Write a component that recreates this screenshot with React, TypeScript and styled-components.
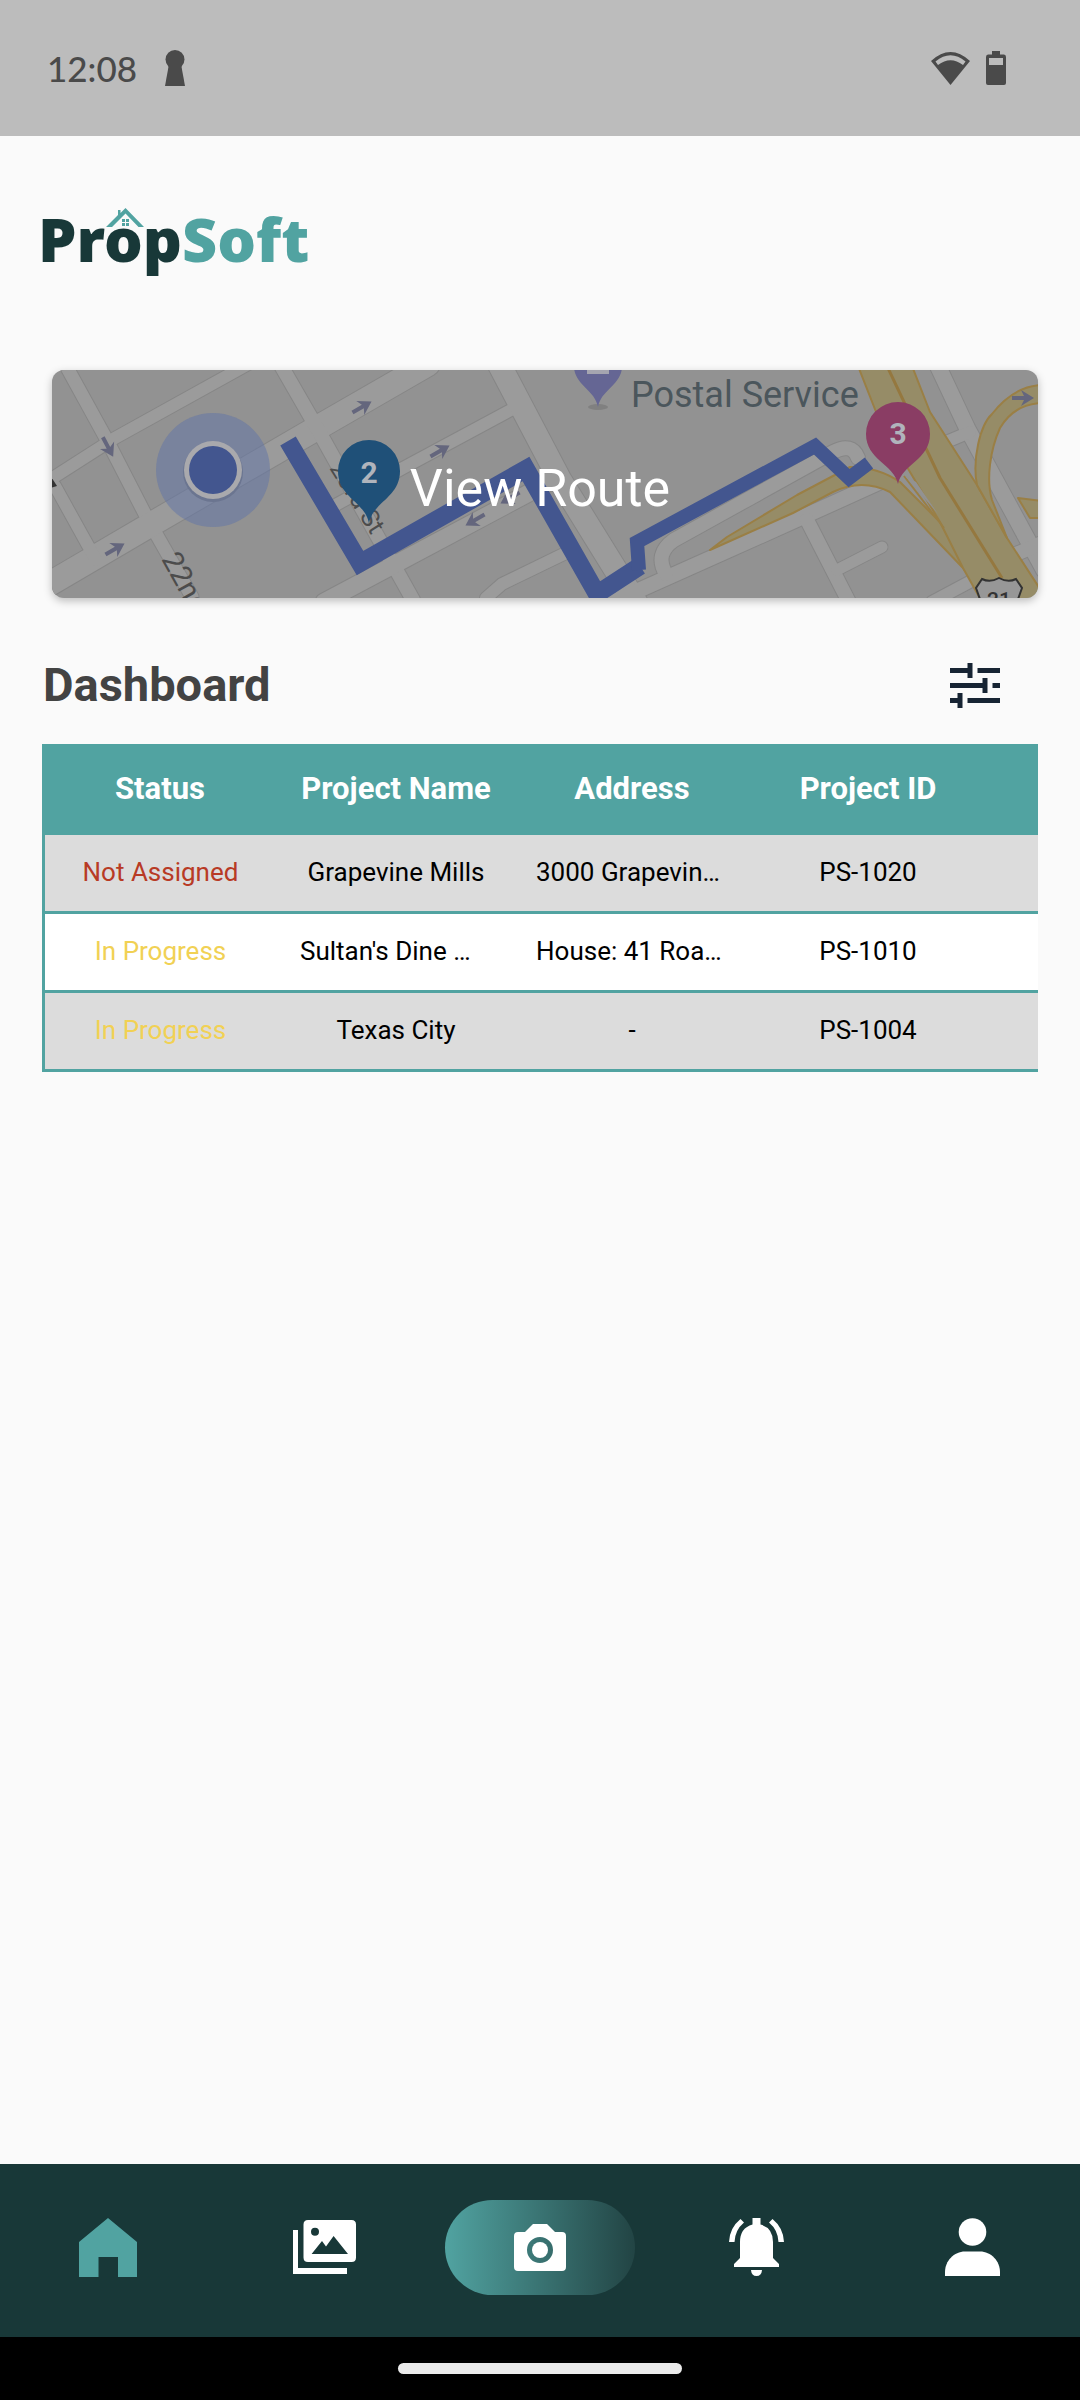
import React from "react";
import styled, { createGlobalStyle } from "styled-components";

const color = {
  teal: "#51a3a1",
  deep: "#183838",
  page: "#fafafa",
  status: "#4a4a4a",
};

const GlobalStyle = createGlobalStyle`
  *, *::before, *::after { box-sizing: border-box; }
  body {
    margin: 0;
    background: ${color.page};
    font-family: Roboto, "Liberation Sans", sans-serif;
  }
  button { font: inherit; border: 0; padding: 0; background: none; cursor: pointer; }
  svg { display: block; }
`;

const Screen = styled.div`
  min-height: 100vh;
  display: flex;
  flex-direction: column;
`;

const StatusBar = styled.header`
  height: 136px;
  padding: 0 74px 0 47px;
  background: #bcbcbc;
  color: ${color.status};
  display: flex;
  align-items: center;
  gap: 28px;
`;

const Clock = styled.time`
  font-family: Lato, sans-serif;
  font-size: 35px;
  font-weight: 500;
  line-height: 40px;
`;

const StatusIcons = styled.div`
  margin-left: auto;
  display: flex;
  align-items: center;
  gap: 16px;
`;

const Main = styled.main`
  flex: 1;
  padding: 64px 42px 0;
`;

const Logo = styled.div`
  position: relative;
  height: 80px;
  margin-left: -4px;
  font-family: "Noto Sans", "Open Sans", sans-serif;
  font-size: 61px;
  font-weight: 900;
  line-height: 78px;
  color: ${color.deep};
`;

const LogoAccent = styled.span`
  color: ${color.teal};
`;

const Roof = styled.svg`
  position: absolute;
  left: 68px;
  top: 7px;
`;

const RouteCard = styled.button`
  position: relative;
  display: grid;
  width: 100%;
  margin-top: 90px;
  padding-left: 10px;
`;

const MapImage = styled.svg`
  width: 100%;
  height: 228px;
  border-radius: 12px;
  background: #929292;
  box-shadow: 0 3px 8px rgba(0, 0, 0, 0.25);
`;

const RouteLabel = styled.span`
  position: absolute;
  inset: 8px 0 0;
  display: flex;
  align-items: center;
  justify-content: center;
  color: #fff;
  font-size: 52px;
`;

const SectionHead = styled.div`
  display: flex;
  align-items: center;
  justify-content: space-between;
  padding: 0 38px 0 1px;
  margin: 56px 0 28px;
`;

const Title = styled.h1`
  margin: 0;
  color: #434343;
  font-size: 47px;
  line-height: 62px;
  font-weight: 700;
`;

const TableScroll = styled.div`
  overflow-x: auto;
`;

const Table = styled.table`
  width: 100%;
  table-layout: fixed;
  border-spacing: 0;
`;

const Column = styled.col<{ $width?: number }>`
  width: ${(p) => (p.$width ? `${p.$width}px` : "auto")};
`;

const HeadCell = styled.th`
  height: 91px;
  padding: 0 0 2px;
  background: ${color.teal};
  color: #fff;
  font-size: 31px;
  font-weight: 700;
`;

const Row = styled.tr`
  background: #fff;
  &:nth-child(odd) { background: #dcdcdc; }
`;

const Cell = styled.td<{ $tone?: string; $cut?: boolean }>`
  height: 79px;
  padding: 0 22px 2px;
  border-bottom: 3px solid ${color.teal};
  color: ${(p) => p.$tone ?? "#000"};
  font-size: 26px;
  text-align: ${(p) => (p.$cut ? "left" : "center")};
  white-space: nowrap;
  &:first-child { border-left: 3px solid ${color.teal}; padding-left: 20px; }
`;

const NavBar = styled.nav`
  height: 173px;
  background: ${color.deep};
  display: grid;
  grid-template-columns: repeat(5, 1fr);
  align-items: center;
  justify-items: center;
  padding-bottom: 7px;
`;

const NavButton = styled.button<{ $active?: boolean }>`
  color: ${(p) => (p.$active ? color.teal : "#fff")};
  padding: 12px;
`;

const CameraButton = styled.button`
  width: 190px;
  height: 95px;
  border-radius: 48px;
  display: grid;
  place-items: center;
  color: #fff;
  background: linear-gradient(90deg, ${color.teal}, #224444);
`;

const GestureArea = styled.footer`
  height: 63px;
  background: #000;
  display: flex;
  justify-content: center;
  align-items: center;
`;

const GestureHandle = styled.div`
  width: 284px;
  height: 11px;
  border-radius: 6px;
  background: #ebebeb;
`;

const STREETS: [string, number][] = [
  ["M12 -8 L56 72 L95 148 L140 227", 13],
  ["M-4 111 L63 68 L200 -8", 12],
  ["M-6 216 L98 155 L265 58 L376 -6", 24],
  ["M3 116 L44 190", 12],
  ["M227 -8 L265 58 L361 230", 14],
  ["M280 137 L351 98 L470 34", 12],
  ["M446 -8 L508 110 L586 236", 23],
  ["M272 232 L351 190 L505 108", 17],
  ["M434 228 L450 214 L520 180", 12],
  ["M556 234 L668 184 L755 145 L828 112", 15],
  ["M614 204 Q602 184 622 170 L698 128 L781 82 Q800 72 806 88", 14],
  ["M755 150 L797 232", 14],
  ["M785 200 L830 177", 11],
  ["M884 -8 L915 58 L992 200", 16],
  ["M894 72 L918 62", 12],
  ["M955 188 L992 172", 14],
  ["M880 232 L925 208", 12],
];

const ARROWS: [number, number, number][] = [
  [56, 77, 62],
  [63, 179, -30],
  [310, 37, -30],
  [388, 81, -30],
  [423, 150, 150],
  [458, 128, 150],
  [971, 28, 0],
];

const HIGHWAY =
  "M806 -4 H860 L878 42 L925 115 L955 168 L990 222 V232 H930 L911 198 L888 152 L828 52 Z";
const RAMP =
  "M658 180 L675 167 L745 125 L798 97 Q826 97 848 112 L888 152 L921 212 L911 198 L838 122 Q810 108 781 122 L741 143 Z";

function RouteMap() {
  return (
    <MapImage viewBox="0 0 986 228" preserveAspectRatio="xMidYMid slice" aria-hidden="true">
      <g fill="none" stroke="#868686" strokeLinecap="round">
        {STREETS.map(([d, w]) => <path key={d} d={d} strokeWidth={w + 2} />)}
      </g>
      <g fill="none" stroke="#9b9b9b" strokeLinecap="round">
        {STREETS.map(([d, w]) => <path key={d} d={d} strokeWidth={w} />)}
      </g>
      <g fill="#968c67" stroke="#9a7f45" strokeWidth="2" strokeLinejoin="round">
        <path d={RAMP} />
        <path d={HIGHWAY} />
        <path d="M925 115 C920 90 928 55 940 44 Q962 16 990 15 V33 Q962 34 948 58 C938 80 934 110 940 130 L955 168 Z" />
        <path d="M966 128 L990 131 V148 L978 148 Z" />
        <path d="M835 -4 L888 108 L950 208" fill="none" stroke="#95783f" strokeWidth="3" />
        <path d="M852 106 L892 158" fill="none" />
      </g>
      <path d="M853 106 L864 112 L886 144 Z" fill="#929292" />
      <circle cx="161" cy="100" r="57" fill="#5f74a8" fillOpacity="0.5" />
      <g fill="#64667d">
        {ARROWS.map(([x, y, r]) => (
          <path
            key={`${x}-${y}`}
            transform={`translate(${x} ${y}) rotate(${r})`}
            d="M-11 -2 H1 L-2 -8 L11 0 L-2 8 L1 2 H-11 Z"
          />
        ))}
      </g>
      <path d="M-2 105 L5 116 L-2 118 Z" fill="#333" />
      <g fontFamily="Roboto, sans-serif" fill="#4c4c4c">
        <text transform="translate(109 189) rotate(61)" fontSize="29">22nd St</text>
        <text transform="translate(277 98) rotate(58)" fontSize="25">23rd St</text>
        <text x="579" y="37" fontSize="36" fill="#4b565c">Postal Service</text>
      </g>
      <g fill="none" stroke="#43568f">
        <path d="M236 71 L308 193 L474 99 L545 224 L588 196" strokeWidth="18" strokeLinejoin="miter" />
        <path d="M587 200 L585 172 L763 76 L797 108 L817 93" strokeWidth="14" />
      </g>
      <circle cx="161" cy="102" r="30" fill="#6b7590" />
      <circle cx="161" cy="100" r="29" fill="#a9a9ad" />
      <circle cx="161" cy="100" r="24" fill="#43568f" />
      <ellipse cx="546" cy="37" rx="10" ry="3" fill="#808080" />
      <path d="M522 -2 H570 C568 16 549 20 546 37 C543 20 524 16 522 -2 Z" fill="#656694" />
      <path d="M535 0 H557 V4 H535 Z" fill="#a5a5b0" />
      <path d="M286 101 A31 31 0 1 1 348 101 C348 128 320 132 317 154 C314 132 286 128 286 101 Z" fill="#1f5078" />
      <path d="M814 64 A32 32 0 1 1 878 64 C878 90 850 94 846 114 C842 94 814 90 814 64 Z" fill="#8a3d64" />
      <g fontFamily="Roboto, sans-serif" fontSize="30" fontWeight="700" fill="#b0b4bc" textAnchor="middle">
        <text x="317" y="113">2</text>
        <text x="846" y="74">3</text>
      </g>
      <path d="M929 232 L924 218 L930 209 Q938 213 947 208 Q956 213 964 209 L970 218 L965 232 Z" fill="#979797" stroke="#333" strokeWidth="2" />
      <text x="947" y="237" fontFamily="Roboto, sans-serif" fontSize="21" fontWeight="500" fill="#333" textAnchor="middle">21</text>
    </MapImage>
  );
}

const RED = "#b83a25";
const YELLOW = "#f1d154";

const PROJECTS = [
  { status: "Not Assigned", tone: RED, name: "Grapevine Mills", address: "3000 Grapevin…", id: "PS-1020" },
  { status: "In Progress", tone: YELLOW, name: "Sultan's Dine …", address: "House: 41 Roa…", id: "PS-1010" },
  { status: "In Progress", tone: YELLOW, name: "Texas City", address: "-", id: "PS-1004" },
];

const isCut = (text: string) => text.endsWith("…");

export default function App() {
  return (
    <Screen>
      <GlobalStyle />
      <StatusBar>
        <Clock>12:08</Clock>
        <svg width="20" height="36" viewBox="0 0 20 36" fill="currentColor" aria-hidden="true">
          <circle cx="10" cy="9.500" r="9.500" />
          <path d="M4 14 H16 L20 36 H0 Z" />
        </svg>
        <StatusIcons>
          <svg width="39" height="33" viewBox="0 0 39 33" fill="currentColor" aria-hidden="true">
            <path fillRule="evenodd" d="M0 9 Q19.500 -9 39 9 L19.500 33 Z M4.500 9.500 L7 13 Q19.500 3.500 32 13 L34.500 9.500 Q19.500 -3 4.500 9.500 Z" />
          </svg>
          <svg width="20" height="34" viewBox="0 0 20 34" fill="currentColor" aria-hidden="true">
            <path fillRule="evenodd" d="M6 0 H14 V3.500 H18 Q20 3.500 20 6 V32 Q20 34 18 34 H2 Q0 34 0 32 V6 Q0 3.500 2 3.500 H6 Z M3 7 V14 H17 V7 Z" />
          </svg>
        </StatusIcons>
      </StatusBar>

      <Main>
        <Logo>
          Prop<LogoAccent>Soft</LogoAccent>
          <Roof width="38" height="20" viewBox="0 0 38 20" fill={color.teal} aria-hidden="true">
            <path d="M0 20 L12 8 V3 H14.500 V6 L19.500 1 L38 20 H32.500 L19.500 6.500 L6 20 Z" />
            <path d="M16 12 H19 V15 H16 Z M20 12 H23 V15 H20 Z M16 16 H19 V19 H16 Z M20 16 H23 V19 H20 Z" />
          </Roof>
        </Logo>

        <RouteCard type="button">
          <RouteMap />
          <RouteLabel>View Route</RouteLabel>
        </RouteCard>

        <SectionHead>
          <Title>Dashboard</Title>
          <button type="button" aria-label="Filter projects">
            <svg width="50" height="45" viewBox="0 0 50 45" fill="#172433" aria-hidden="true">
              <path d="M0 5 H17.500 V0 H22.500 V15 H17.500 V10 H0 Z M27.500 5 H50 V10 H27.500 Z" />
              <path d="M0 20 H32.500 V15 H37.500 V30 H32.500 V25 H0 Z M42.500 20 H50 V25 H42.500 Z" />
              <path d="M0 35 H7.500 V30 H12.500 V45 H7.500 V40 H0 Z M17.500 35 H50 V40 H17.500 Z" />
            </svg>
          </button>
        </SectionHead>

        <TableScroll>
          <Table>
            <colgroup>
              <Column $width={236} />
              <Column $width={236} />
              <Column $width={236} />
              <Column $width={236} />
              <Column />
            </colgroup>
            <thead>
              <tr>
                <HeadCell scope="col">Status</HeadCell>
                <HeadCell scope="col">Project Name</HeadCell>
                <HeadCell scope="col">Address</HeadCell>
                <HeadCell scope="col">Project ID</HeadCell>
                <HeadCell as="td" />
              </tr>
            </thead>
            <tbody>
              {PROJECTS.map((p) => (
                <Row key={p.id}>
                  <Cell $tone={p.tone}>{p.status}</Cell>
                  <Cell $cut={isCut(p.name)}>{p.name}</Cell>
                  <Cell $cut={isCut(p.address)}>{p.address}</Cell>
                  <Cell>{p.id}</Cell>
                  <Cell />
                </Row>
              ))}
            </tbody>
          </Table>
        </TableScroll>
      </Main>

      <NavBar>
        <NavButton type="button" $active aria-label="Home">
          <svg width="58" height="59" viewBox="0 0 58 59" fill="currentColor" aria-hidden="true">
            <path d="M29 0 L58 24 V59 H39 V39 H19.500 V59 H0 V24 Z" />
          </svg>
        </NavButton>
        <NavButton type="button" aria-label="Gallery">
          <svg width="63" height="54" viewBox="0 0 63 54" fill="currentColor" aria-hidden="true">
            <path fillRule="evenodd" d="M15 0 H58.500 Q63 0 63 4.500 V37.500 Q63 42 58.500 42 H15 Q10.500 42 10.500 37.500 V4.500 Q10.500 0 15 0 Z M22 7.700 A4 4 0 1 0 22 15.700 A4 4 0 1 0 22 7.700 Z M18.600 34 H55 L40.600 16 L33 26.500 L29 21 Z" />
            <path d="M0 10 H5 V48 H54 V54 H0 Z" />
          </svg>
        </NavButton>
        <CameraButton type="button" aria-label="Camera">
          <svg width="52" height="47" viewBox="0 0 52 47" fill="currentColor" aria-hidden="true">
            <path fillRule="evenodd" d="M19 0 H33 L41 8 H48 Q52 8 52 12 V43 Q52 47 48 47 H4 Q0 47 0 43 V12 Q0 8 4 8 H11 Z M26 13 A13 13 0 1 0 26 39 A13 13 0 1 0 26 13 Z" />
            <circle cx="26" cy="26" r="8" />
          </svg>
        </CameraButton>
        <NavButton type="button" aria-label="Notifications">
          <svg width="55" height="58" viewBox="0 0 55 58" fill="currentColor" aria-hidden="true">
            <path d="M23.500 0 H31.500 V6.500 Q44 10 44 24 V40 L50 46 V49 H5 V46 L11 40 V24 Q11 10 23.500 6.500 Z" />
            <path d="M22 52 H33 Q32.500 58 27.500 58 Q22.500 58 22 52 Z" />
            <path d="M0 24 Q0.500 10 11.500 1 L15 4.500 Q6 12 5.500 24 Z M55 24 Q54.500 10 43.500 1 L40 4.500 Q49 12 49.500 24 Z" />
          </svg>
        </NavButton>
        <NavButton type="button" aria-label="Profile">
          <svg width="55" height="58" viewBox="0 0 55 58" fill="currentColor" aria-hidden="true">
            <circle cx="27.500" cy="14" r="13.800" />
            <path d="M0 58 V54 C0 43 9 33.500 20 33.500 H35 C46 33.500 55 43 55 54 V58 Z" />
          </svg>
        </NavButton>
      </NavBar>
      <GestureArea>
        <GestureHandle />
      </GestureArea>
    </Screen>
  );
}
